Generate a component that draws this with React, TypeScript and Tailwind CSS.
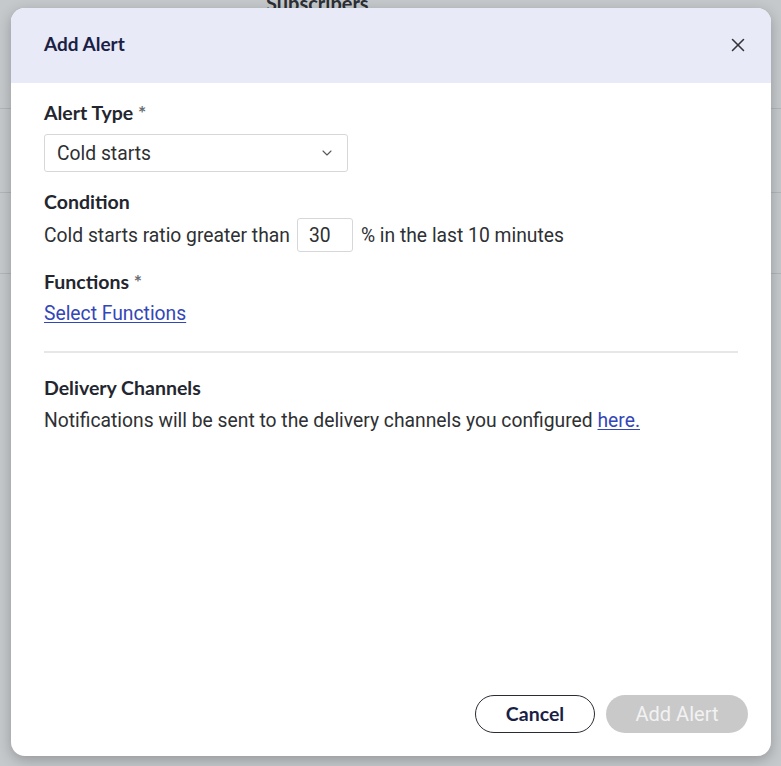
import { X, ChevronDown } from "lucide-react";

const label = "font-['Lato','Noto_Sans',sans-serif] font-bold text-[19.5px] leading-[25px] text-[#23262e]";
const body = "font-['Roboto',sans-serif] text-[19.3px] leading-[25px] text-[#2e3033]";

export default function App() {
  return (
    <div className="relative h-[766px] w-[781px] overflow-hidden bg-[#c6c9cc]">
      {/* page behind the overlay */}
      <div className="absolute left-[266px] top-[-12px] font-['Lato',sans-serif] text-[20px] font-bold text-[#2c2f35]">
        Subscribers
      </div>
      <div className="absolute left-0 right-0 top-[108px] h-px bg-[#b3b6b9]" />
      <div className="absolute left-0 right-0 top-[192px] h-px bg-[#b3b6b9]" />
      <div className="absolute left-0 right-0 top-[273px] h-px bg-[#b3b6b9]" />

      {/* modal */}
      <div className="absolute left-[11px] top-[8px] flex h-[748px] w-[760px] flex-col overflow-hidden rounded-[14px] bg-white shadow-[0_4px_14px_rgba(0,0,0,0.25)]">
        <div className="flex h-[75px] shrink-0 items-center justify-between bg-[#e9eaf8] pb-[2px] pl-[33px] pr-[22px]">
          <h2 className="font-['Lato',sans-serif] text-[19px] font-bold text-[#1b1f45]">Add Alert</h2>
          <X size={22} strokeWidth={1.7} className="text-[#33353a]" />
        </div>

        <div className="flex flex-1 flex-col px-[33px] pt-[17px]">
          <div className={label}>
            Alert Type <span className="text-[#6b6e73]">*</span>
          </div>
          <div className="mt-[9px] flex h-[38px] w-[304px] items-center justify-between rounded-[3px] border border-[#d6d7da] pl-[12px] pr-[12px]">
            <span className={body}>Cold starts</span>
            <ChevronDown size={16} strokeWidth={1.6} className="text-[#55585d]" />
          </div>

          <div className={`${label} mt-[17px]`}>Condition</div>
          <div className={`${body} mt-[4px] flex items-center`}>
            <span>Cold starts ratio greater than</span>
            <div className="ml-[7px] mr-[8px] flex h-[34px] w-[56px] items-center rounded-[3px] border border-[#d6d7da] pl-[11px]">30</div>
            <span>% in the last 10 minutes</span>
          </div>

          <div className={`${label} mt-[17px]`}>
            Functions <span className="text-[#6b6e73]">*</span>
          </div>
          <a className={`${body} mt-[7px] w-fit text-[#3346b8] underline decoration-1 underline-offset-2`} href="#">
            Select Functions
          </a>

          <div className="mt-[25px] h-[2px] w-full bg-[#e6e7e9]" />

          <div className={`${label} mt-[22px]`}>Delivery Channels</div>
          <div className={`${body} mt-[8px]`}>
            Notifications will be sent to the delivery channels you configured{" "}
            <a className="text-[#3346b8] underline decoration-1 underline-offset-2" href="#">
              here.
            </a>
          </div>

          <div className="mt-auto mb-[23px] mr-[-10px] flex justify-end gap-[11px]">
            <button className="h-[38px] w-[120px] rounded-full border-[1.5px] border-[#2a2c33] font-['Lato',sans-serif] text-[19.5px] font-bold text-[#1b1f45]">
              Cancel
            </button>
            <button className="h-[38px] w-[142px] rounded-full bg-[#c9c9c9] font-['Roboto',sans-serif] text-[20px] text-[#f2f2f2]">
              Add Alert
            </button>
          </div>
        </div>
      </div>
    </div>
  );
}
